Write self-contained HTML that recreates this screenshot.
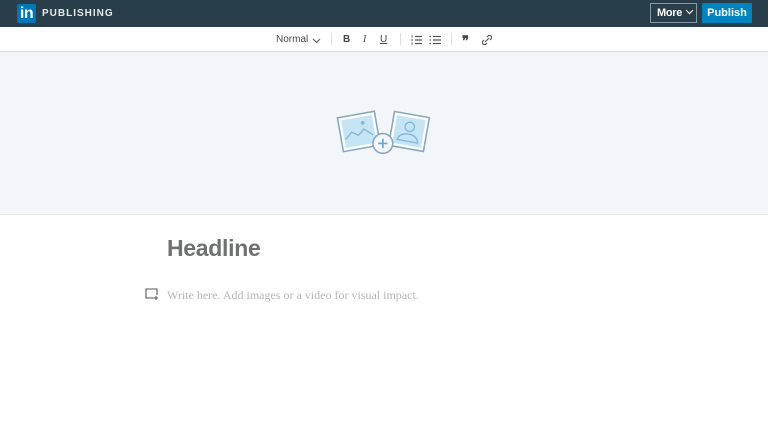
<!DOCTYPE html>
<html><head><meta charset="utf-8"><style>
*{margin:0;padding:0;box-sizing:border-box}
body{width:768px;height:441px;overflow:hidden;background:#fff;font-family:"Liberation Sans",sans-serif;position:relative}
.hdr{position:absolute;top:0;left:0;width:768px;height:27px;background:#283e4a}
.logo{position:absolute;left:17px;top:4px;width:19px;height:19px;background:#0077b5;border-radius:2px;color:#fff;font-weight:bold;font-size:16px;line-height:19px;text-align:center;letter-spacing:-0.5px}
.pub{position:absolute;left:42px;top:8px;color:#e6e9ec;font-size:10px;font-weight:bold;letter-spacing:1px}
.more{position:absolute;left:650px;top:3px;width:47px;height:20px;border:1px solid #8a9aa3;color:#fff;font-size:11px;font-weight:bold;line-height:18px;padding-left:6px;white-space:nowrap;letter-spacing:-0.3px}
.publish{position:absolute;left:702px;top:3px;width:50px;height:20px;background:#0084bf;color:#fff;font-size:11px;font-weight:bold;line-height:20px;text-align:center;border-radius:1px}
.tb{position:absolute;top:27px;left:0;width:768px;height:25px;background:#fff;border-bottom:1px solid #d8dcdf;box-shadow:0 1px 2px rgba(0,0,0,.06)}
.tb span{position:absolute;top:7px;font-size:10px;color:#434649}
.sep{position:absolute;top:6px;width:1px;height:12px;background:#dcdfe1}
.gray{position:absolute;top:52px;left:0;width:768px;height:163px;background:#f3f6f8;border-bottom:1px solid #e6e9ec}
.h1{position:absolute;left:167px;top:235px;font-size:23px;font-weight:bold;color:#6f7070;letter-spacing:-0.3px}
.body{position:absolute;left:167px;top:288px;font-family:"Liberation Serif",serif;font-size:12px;color:#b3b6b9}
</style></head><body>
<div class="hdr">
<div class="logo">in</div>
<div class="pub">PUBLISHING</div>
<div class="more">More <svg width="9" height="6" viewBox="0 0 9 6" style="vertical-align:1px"><path d="M1 1l3.5 3.5L8 1" stroke="#fff" fill="none" stroke-width="1.2"/></svg></div>
<div class="publish">Publish</div>
</div>
<div class="tb">
<span style="left:276px">Normal</span>
<svg style="position:absolute;left:312px;top:11px" width="9" height="6"><path d="M1 1l3.5 3.5L8 1" stroke="#555" fill="none" stroke-width="1.1"/></svg>
<div class="sep" style="left:331px"></div>
<span style="left:343px;font-weight:bold">B</span>
<span style="left:363px;font-style:italic;font-family:'Liberation Serif',serif">I</span>
<span style="left:380px;text-decoration:underline">U</span>
<div class="sep" style="left:400px"></div>
<svg style="position:absolute;left:411px;top:8px" width="11" height="10"><g stroke="#555" stroke-width="1.2"><path d="M4 1.5h7M4 5h7M4 8.5h7"/><path d="M1 0.5v2M1 4v2M1 7.5v2" stroke-width="1"/></g></svg>
<svg style="position:absolute;left:429px;top:8px" width="12" height="10"><g stroke="#555" stroke-width="1.2"><path d="M4 1.5h8M4 5h8M4 8.5h8M0.5 1.5h1.5M0.5 5h1.5M0.5 8.5h1.5"/></g></svg>
<div class="sep" style="left:451px"></div>
<span style="left:462px;font-weight:bold;font-size:13px;top:6px;letter-spacing:-1px">❞</span>
<svg style="position:absolute;left:482px;top:8px" width="10" height="10"><path d="M3 7l4-4M2 5l-1 1a1.4 1.4 0 0 0 3 3l1-1M5 2l1-1a1.4 1.4 0 0 1 3 3l-1 1" stroke="#555" fill="none" stroke-width="1.2"/></svg>
</div>
<div class="gray">
<svg style="position:absolute;left:334px;top:53px" width="100" height="53" viewBox="-2 -2 100 53">
<g transform="translate(-2 -1) scale(1.04)">
<g transform="rotate(-10 24 25)"><rect x="6" y="8" width="36" height="33" fill="#fff" stroke="#86a8bd" stroke-width="1.5"/><rect x="9" y="11" width="30" height="27" fill="#c6e5f4"/><path d="M10 30l7-6 6 4 6-5 8 7" stroke="#86b9d6" fill="none" stroke-width="1.3"/><circle cx="29" cy="17" r="1.8" fill="#86b9d6"/></g>
<g transform="rotate(10 72 25)"><rect x="55" y="8" width="34" height="33" fill="#fff" stroke="#86a8bd" stroke-width="1.5"/><rect x="58" y="11" width="28" height="27" fill="#c6e5f4"/><circle cx="72" cy="20" r="4.5" fill="none" stroke="#86b9d6" stroke-width="1.3"/><path d="M62 34c1-5 5-7 10-7s9 2 10 7z" fill="none" stroke="#86b9d6" stroke-width="1.3"/></g>
<circle cx="47" cy="36" r="9.5" fill="#f3f6f8" stroke="#86a8bd" stroke-width="1.5"/>
<path d="M47 31.5v9M42.5 36h9" stroke="#5faad6" stroke-width="1.6"/>
</g>
</svg>
</div>
<div class="h1">Headline</div>
<svg style="position:absolute;left:145px;top:288px" width="14" height="12"><path d="M9 10H1V1h11v6" fill="none" stroke="#555" stroke-width="1.1"/><path d="M11 8v4M9 10h4" stroke="#555" stroke-width="1"/></svg>
<div class="body">Write here. Add images or a video for visual impact.</div>
</body></html>
